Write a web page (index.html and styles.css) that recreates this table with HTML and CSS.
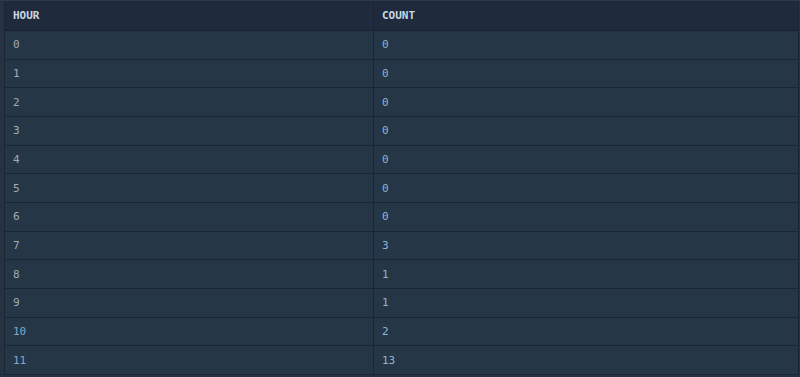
FILE: index.html
```html
<!DOCTYPE html>
<html>
<head>
<meta charset="utf-8">
<link rel="stylesheet" href="styles.css">
</head>
<body>
<div class="wrap">
<table class="grid">
<thead>
<tr><th class="c1">HOUR</th><th class="c2">COUNT</th></tr>
</thead>
<tbody>
<tr><td class="h">0</td><td class="n">0</td></tr>
<tr><td class="h">1</td><td class="n">0</td></tr>
<tr><td class="h">2</td><td class="n">0</td></tr>
<tr><td class="h">3</td><td class="n">0</td></tr>
<tr><td class="h">4</td><td class="n">0</td></tr>
<tr><td class="h">5</td><td class="n">0</td></tr>
<tr><td class="h">6</td><td class="n">0</td></tr>
<tr><td class="h">7</td><td class="n">3</td></tr>
<tr><td class="h">8</td><td class="n">1</td></tr>
<tr><td class="h">9</td><td class="n">1</td></tr>
<tr><td class="hb">10</td><td class="n">2</td></tr>
<tr><td class="hb">11</td><td class="n">13</td></tr>
</tbody>
</table>
</div>
</body>
</html>
```
FILE: styles.css
```css
html, body {
  margin: 0;
  padding: 0;
  background: #263342;
}
.wrap {
  padding: 0 1px 0 4px;
  border-top: 1px solid #2c3a4a;
}
.grid {
  width: 100%;
  border-collapse: collapse;
  table-layout: fixed;
  font-family: "DejaVu Sans Mono", "Liberation Mono", monospace;
  font-size: 11px;
  border-left: 1px solid #1b2533;
  border-right: 1px solid #1b2533;
}
.c1 { width: 352px; }
th {
  background: #1f2a3c;
  color: #c9d7e2;
  font-weight: bold;
  text-align: left;
  height: 29px;
  padding: 0 8px;
  border-bottom: 1px solid #18212d;
}
th + th, td + td {
  border-left: 1px solid #1b2533;
}
td {
  background: #253646;
  height: 27.67px;
  padding: 0 8px;
  border-bottom: 1px solid #1b2533;
}
.h { color: #a2adb2; }
.hb { color: #7faacb; }
.n { color: #8db5d2; }
```
